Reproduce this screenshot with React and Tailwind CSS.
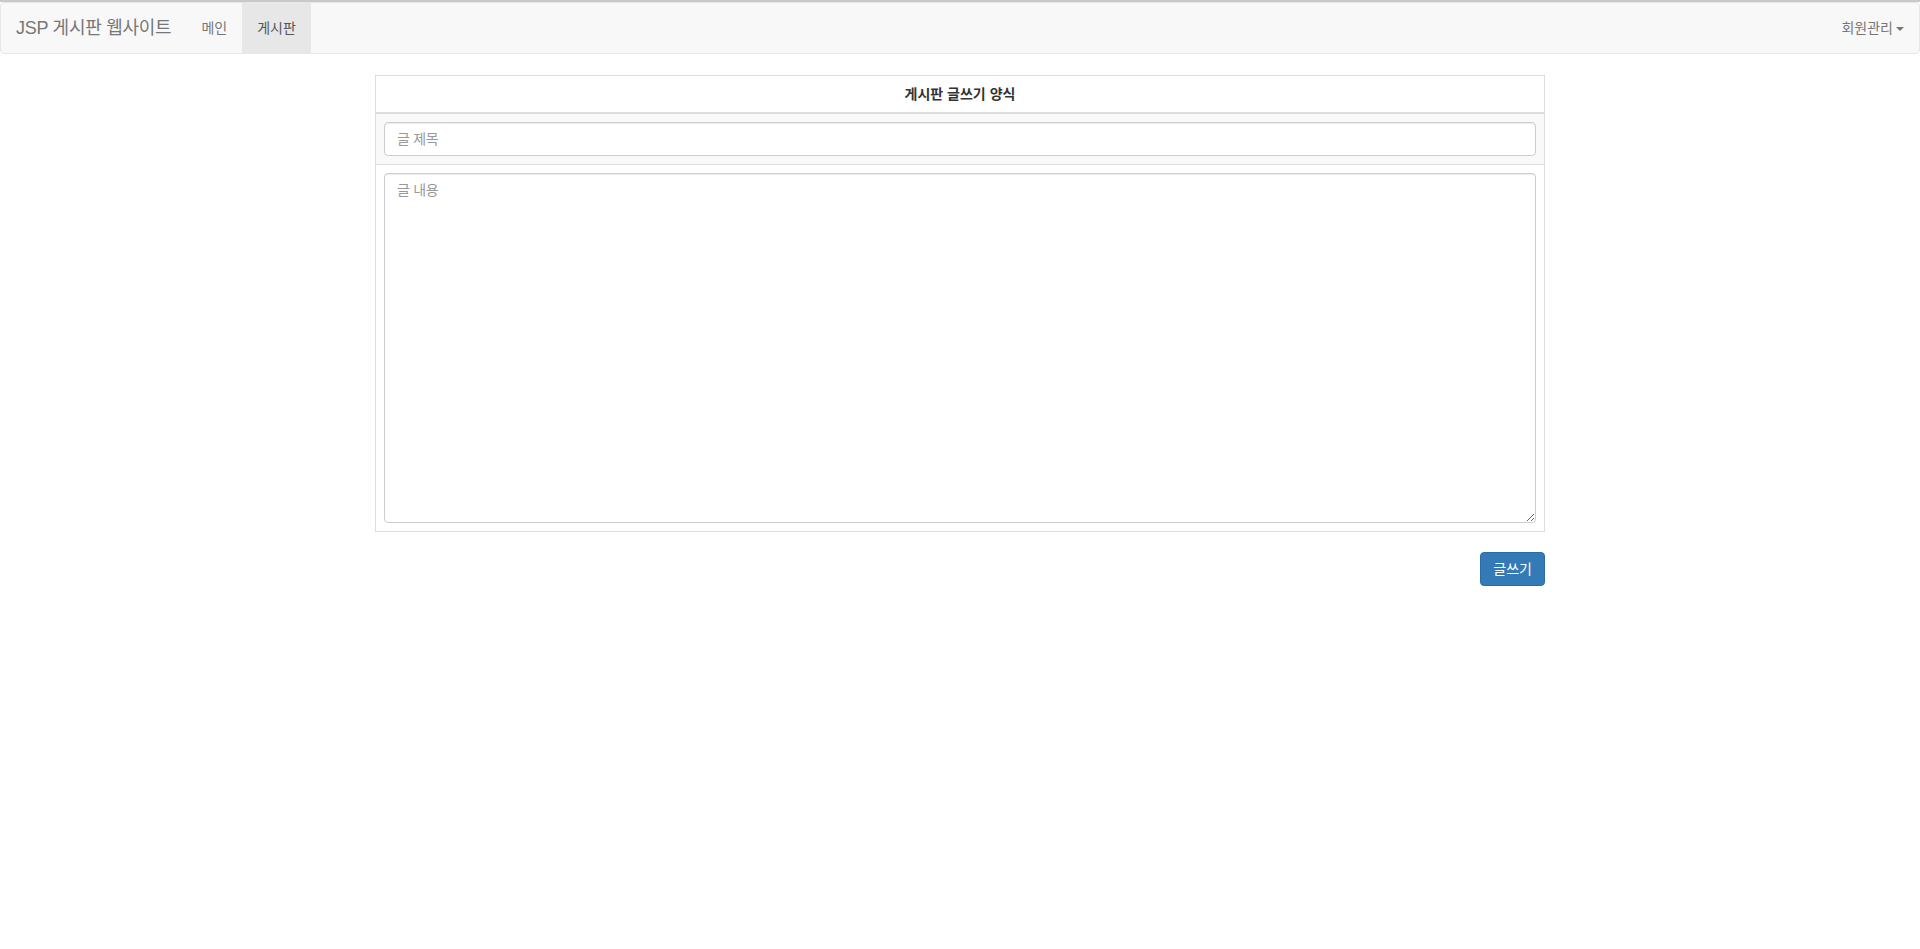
export default function App() {
  const font = {
    fontFamily:
      '"Liberation Sans", "Noto Sans CJK KR", Arial, sans-serif',
  };

  return (
    <div
      className="min-h-[949px] w-full bg-white text-[14px] leading-[20px] text-[#333]"
      style={font}
    >
      {/* window edge */}
      <div className="h-[2px] w-full bg-[#c8c8c8]" />

      {/* Navbar */}
      <nav className="flex h-[52px] items-stretch justify-between rounded-[4px] border border-[#e7e7e7] bg-[#f8f8f8]">
        <div className="flex items-stretch">
          <a className="flex items-center px-[15px] text-[18px] leading-[20px] text-[#777] tracking-[-0.015em]">
            JSP 게시판 웹사이트
          </a>
          <ul className="flex items-stretch">
            <li className="flex items-center px-[15px] text-[#777]">
              메인
            </li>
            <li className="flex items-center bg-[#e7e7e7] px-[15px] text-[#555]">
              게시판
            </li>
          </ul>
        </div>
        <div className="flex items-center px-[15px] text-[#777]">
          <span>회원관리</span>
          <span className="ml-[3px] mt-[1px] inline-block h-0 w-0 border-x-[4px] border-t-[4px] border-x-transparent border-t-[#777]" />
        </div>
      </nav>

      {/* Form */}
      <div className="mx-auto mt-[21px] w-[1170px]">
        <div className="border border-[#ddd]">
          <div className="border-b-2 border-[#ddd] py-2 text-center font-bold">
            게시판 글쓰기 양식
          </div>
          <div className="border-b border-[#ddd] bg-[#f9f9f9] p-2">
            <input
              type="text"
              placeholder="글 제목"
              maxLength={50}
              className="block h-[34px] w-full rounded-[4px] border border-[#ccc] bg-white px-3 py-[6px] text-[14px] text-[#555] shadow-[inset_0_1px_1px_rgba(0,0,0,0.075)] outline-none placeholder:text-[#999] tracking-[-0.02em]"
              style={font}
            />
          </div>
          <div className="p-2">
            <textarea
              placeholder="글 내용"
              maxLength={2048}
              className="block h-[350px] w-full rounded-[4px] border border-[#ccc] bg-white px-3 py-[6px] text-[14px] leading-[20px] text-[#555] shadow-[inset_0_1px_1px_rgba(0,0,0,0.075)] outline-none placeholder:text-[#999] tracking-[-0.02em]"
              style={font}
            />
          </div>
        </div>

        <div className="mt-5 flex justify-end">
          <button
            type="submit"
            className="h-[34px] rounded-[4px] border border-[#2e6da4] bg-[#337ab7] px-3 text-[14px] text-white"
            style={font}
          >
            글쓰기
          </button>
        </div>
      </div>
    </div>
  );
}
